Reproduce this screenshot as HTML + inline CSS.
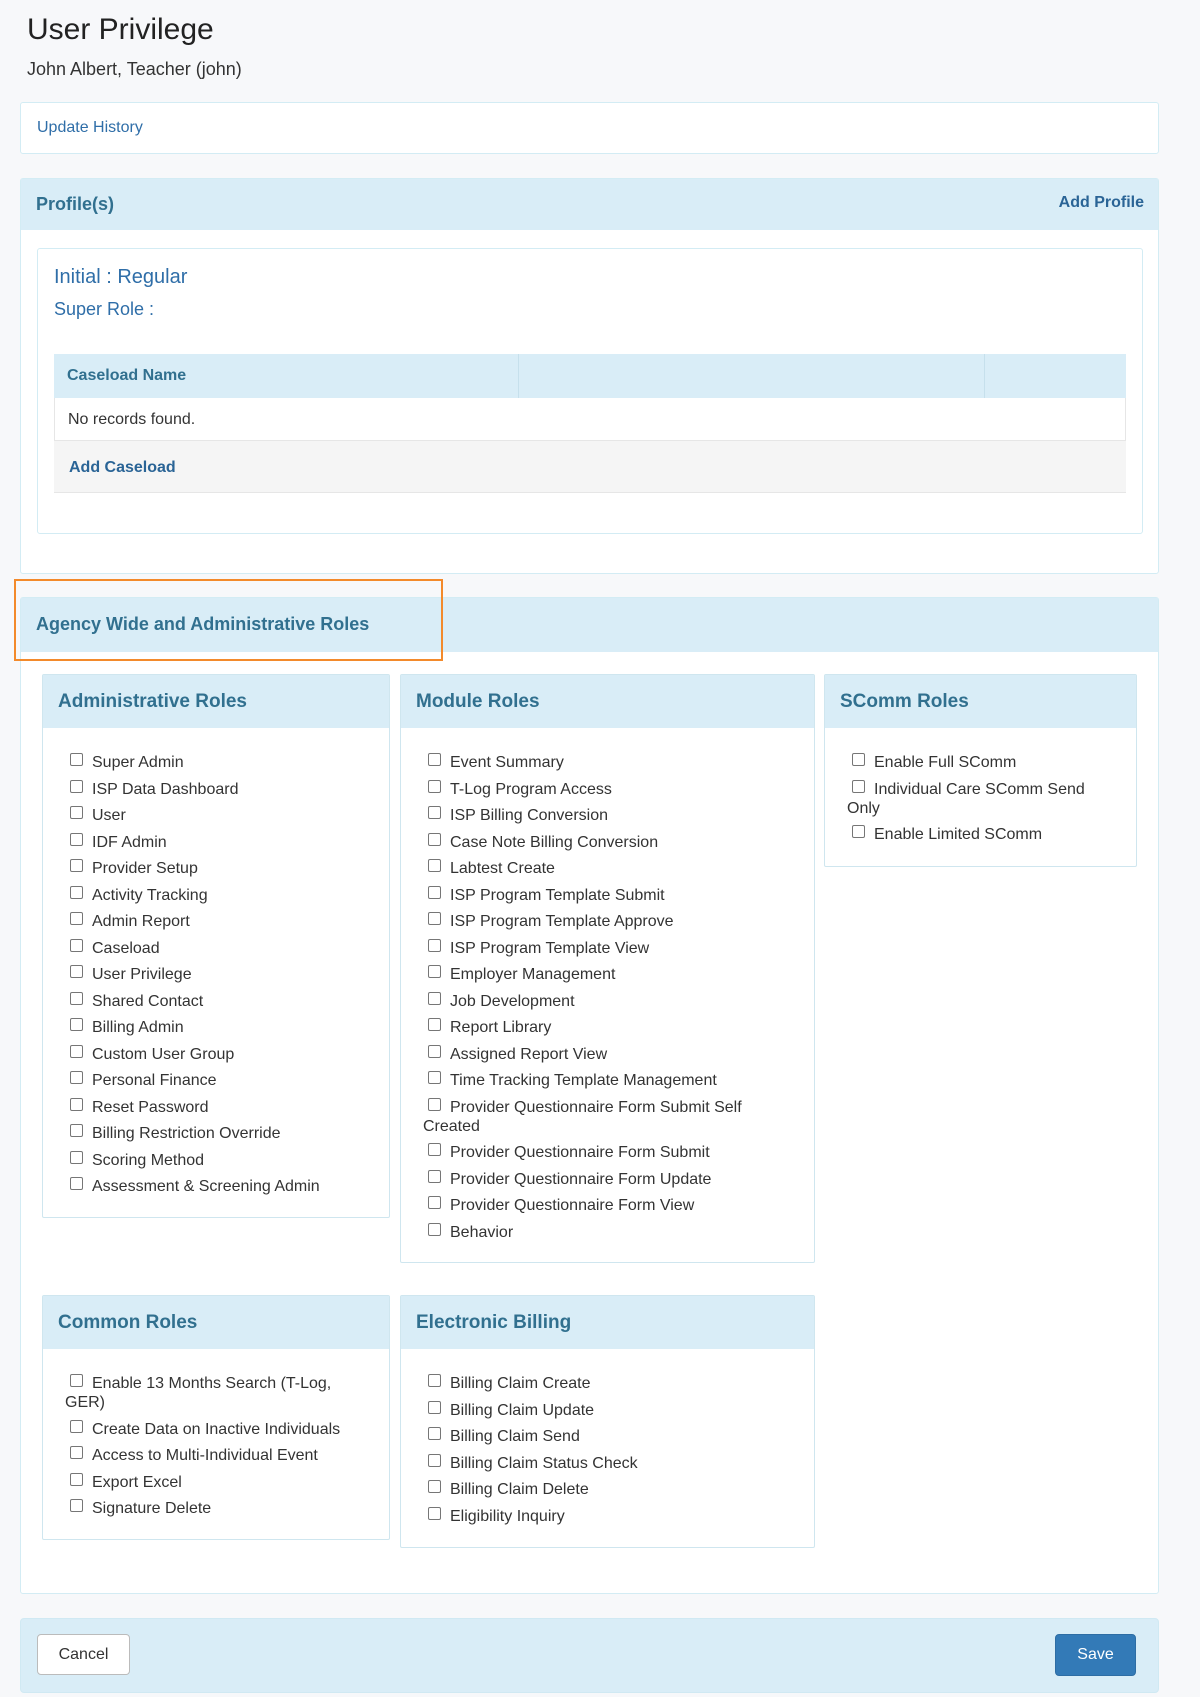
<!DOCTYPE html>
<html><head><meta charset="utf-8"><style>
*{box-sizing:border-box;margin:0;padding:0}
body{width:1200px;height:1697px;background:#f7f8fa;font-family:"Liberation Sans",sans-serif;position:relative;overflow:hidden;color:#333}
.a{position:absolute}
.panel{position:absolute;background:#fff;border:1px solid #d3ecf4;border-radius:3px}
.hd{background:#d9edf7;color:#31708f;font-weight:bold}
.card{position:absolute;background:#fff;border:1px solid #cfe6ef;border-radius:2px}
.card .hd{height:53px;line-height:53px;padding-left:15px;font-size:19px}
ul{list-style:none;padding:25px 0 0 22px}
li{font-size:16px;line-height:19px;margin-bottom:7.5px;color:#333}
li i{display:inline-block;width:13px;height:13px;border:1px solid #767676;border-radius:2px;margin:0 9px 0 5px;vertical-align:1px;background:#fff}
</style></head><body>
<div class="a" style="left:27px;top:13px;font-size:30px;color:#222">User Privilege</div>
<div class="a" style="left:27px;top:59px;font-size:18px;color:#333">John Albert, Teacher (john)</div>
<div class="panel" style="left:20px;top:102px;width:1139px;height:52px"><span class="a" style="left:16px;top:16px;font-size:16px;color:#2f6ea8">Update History</span></div>

<div class="panel" style="left:20px;top:178px;width:1139px;height:396px">
 <div class="hd" style="height:51px;line-height:51px;padding-left:15px;font-size:18px">Profile(s)<span style="position:absolute;right:14px;top:-2px;font-size:16px;color:#2a6496">Add Profile</span></div>
 <div class="a" style="left:16px;top:69px;width:1106px;height:286px;border:1px solid #d3ecf4;border-radius:3px">
  <div class="a" style="left:16px;top:17px;font-size:20px;color:#2f6ea8">Initial : Regular</div>
  <div class="a" style="left:16px;top:50px;font-size:18px;color:#2f6ea8">Super Role :</div>
  <div class="a" style="left:16px;top:105px;width:1072px;height:44px;background:#d9edf7;color:#31708f;font-weight:bold;font-size:16px;line-height:44px;padding-left:13px">Caseload Name
   <span class="a" style="left:464px;top:0;width:1px;height:44px;background:#c6e0ec"></span>
   <span class="a" style="left:930px;top:0;width:1px;height:44px;background:#c6e0ec"></span></div>
  <div class="a" style="left:16px;top:149px;width:1072px;height:43px;border:1px solid #e6e6e6;border-top:0;font-size:16px;line-height:44px;padding-left:13px">No records found.</div>
  <div class="a" style="left:16px;top:192px;width:1072px;height:52px;background:#f5f5f5;border-bottom:1px solid #e6e6e6;font-size:16px;font-weight:bold;line-height:54px;padding-left:15px;color:#2a6496">Add Caseload</div>
 </div>
</div>

<div class="panel" style="left:20px;top:597px;width:1139px;height:997px">
 <div class="hd" style="height:54px;line-height:52px;padding-left:15px;font-size:18px">Agency Wide and Administrative Roles</div>
</div>
<div class="a" style="left:14px;top:579px;width:429px;height:82px;border:2px solid #f38a2b"></div>

<div class="card" style="left:42px;top:674px;width:348px;height:544px"><div class="hd">Administrative Roles</div><ul>
<li><i></i>Super Admin</li><li><i></i>ISP Data Dashboard</li><li><i></i>User</li><li><i></i>IDF Admin</li><li><i></i>Provider Setup</li><li><i></i>Activity Tracking</li><li><i></i>Admin Report</li><li><i></i>Caseload</li><li><i></i>User Privilege</li><li><i></i>Shared Contact</li><li><i></i>Billing Admin</li><li><i></i>Custom User Group</li><li><i></i>Personal Finance</li><li><i></i>Reset Password</li><li><i></i>Billing Restriction Override</li><li><i></i>Scoring Method</li><li><i></i>Assessment &amp; Screening Admin</li></ul></div>

<div class="card" style="left:400px;top:674px;width:415px;height:589px"><div class="hd">Module Roles</div><ul>
<li><i></i>Event Summary</li><li><i></i>T-Log Program Access</li><li><i></i>ISP Billing Conversion</li><li><i></i>Case Note Billing Conversion</li><li><i></i>Labtest Create</li><li><i></i>ISP Program Template Submit</li><li><i></i>ISP Program Template Approve</li><li><i></i>ISP Program Template View</li><li><i></i>Employer Management</li><li><i></i>Job Development</li><li><i></i>Report Library</li><li><i></i>Assigned Report View</li><li><i></i>Time Tracking Template Management</li><li><i></i>Provider Questionnaire Form Submit Self<br>Created</li><li><i></i>Provider Questionnaire Form Submit</li><li><i></i>Provider Questionnaire Form Update</li><li><i></i>Provider Questionnaire Form View</li><li><i></i>Behavior</li></ul></div>

<div class="card" style="left:824px;top:674px;width:313px;height:193px"><div class="hd">SComm Roles</div><ul>
<li><i></i>Enable Full SComm</li><li><i></i>Individual Care SComm Send<br>Only</li><li><i></i>Enable Limited SComm</li></ul></div>

<div class="card" style="left:42px;top:1295px;width:348px;height:245px"><div class="hd">Common Roles</div><ul>
<li><i></i>Enable 13 Months Search (T-Log,<br>GER)</li><li><i></i>Create Data on Inactive Individuals</li><li><i></i>Access to Multi-Individual Event</li><li><i></i>Export Excel</li><li><i></i>Signature Delete</li></ul></div>

<div class="card" style="left:400px;top:1295px;width:415px;height:253px"><div class="hd">Electronic Billing</div><ul>
<li><i></i>Billing Claim Create</li><li><i></i>Billing Claim Update</li><li><i></i>Billing Claim Send</li><li><i></i>Billing Claim Status Check</li><li><i></i>Billing Claim Delete</li><li><i></i>Eligibility Inquiry</li></ul></div>

<div class="a" style="left:20px;top:1618px;width:1139px;height:75px;background:#d9edf7;border:1px solid #d0e9f3;border-radius:4px">
 <div class="a" style="left:16px;top:15px;width:93px;height:41px;background:#fff;border:1px solid #bbb;border-radius:4px;font-size:16px;line-height:39px;text-align:center;color:#333">Cancel</div>
 <div class="a" style="left:1034px;top:15px;width:81px;height:42px;background:#337ab7;border:1px solid #2e6da4;border-radius:4px;font-size:16px;line-height:40px;text-align:center;color:#fff">Save</div>
</div>
</body></html>
